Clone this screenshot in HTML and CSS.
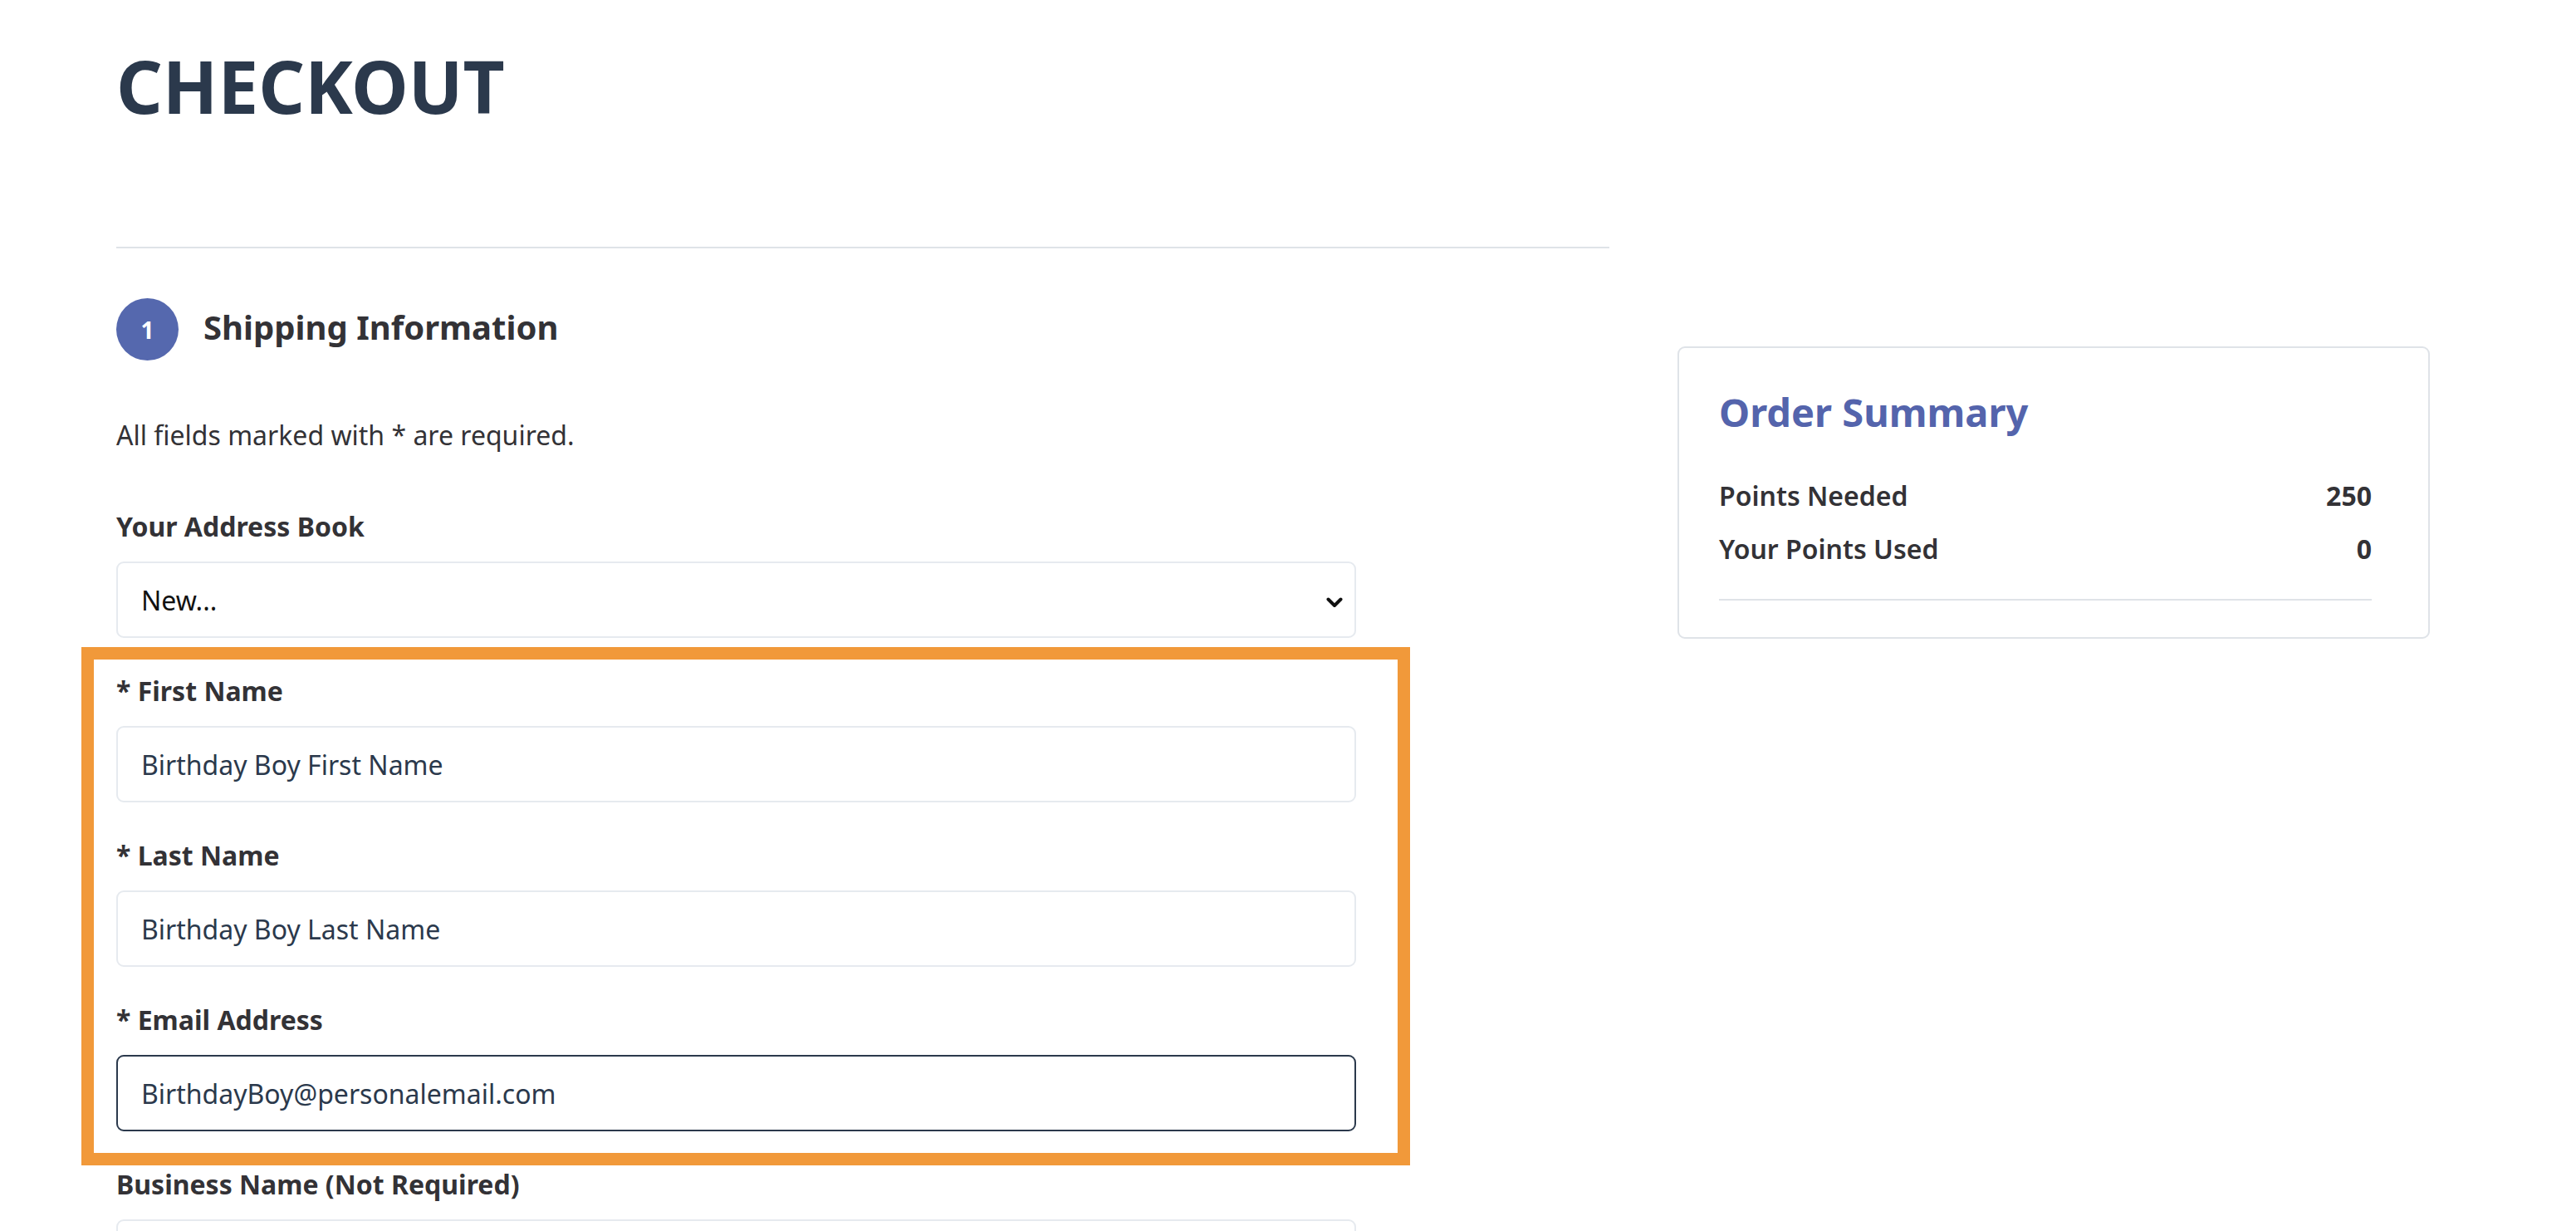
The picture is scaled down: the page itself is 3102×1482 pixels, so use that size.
FILE: index.html
```html
<!DOCTYPE html>
<html lang="en">
<head>
<meta charset="utf-8">
<title>Checkout</title>
<link rel="stylesheet" href="styles.css">
</head>
<body>
<div class="page">
  <main class="main">
    <h1 class="title">CHECKOUT</h1>
    <hr class="rule">
    <section class="step">
      <div class="step-head">
        <span class="step-num">1</span>
        <h2 class="step-title">Shipping Information</h2>
      </div>
      <p class="note">All fields marked with * are required.</p>
      <form class="form">
        <div class="field">
          <label class="label" for="book">Your Address Book</label>
          <div class="select-wrap">
            <select class="control select" id="book"><option>New...</option></select>
            <svg class="chev" width="20" height="13" viewBox="0 0 20 13" aria-hidden="true"><path d="M2.5 2.5 L10 10 L17.5 2.5" fill="none" stroke="#111" stroke-width="4" stroke-linecap="round" stroke-linejoin="round"/></svg>
          </div>
        </div>
        <div class="group">
          <div class="field">
            <label class="label" for="fn">* First Name</label>
            <input class="control input" id="fn" type="text" value="Birthday Boy First Name">
          </div>
          <div class="field">
            <label class="label" for="ln">* Last Name</label>
            <input class="control input" id="ln" type="text" value="Birthday Boy Last Name">
          </div>
          <div class="field">
            <label class="label" for="em">* Email Address</label>
            <input class="control input focused" id="em" type="text" value="BirthdayBoy@personalemail.com">
          </div>
        </div>
        <div class="field">
          <label class="label" for="bn">Business Name (Not Required)</label>
          <input class="control input" id="bn" type="text" value="">
        </div>
      </form>
    </section>
  </main>
  <aside class="summary">
    <h3 class="summary-title">Order Summary</h3>
    <div class="summary-rows">
      <div class="summary-row"><span>Points Needed</span><span class="val">250</span></div>
      <div class="summary-row"><span>Your Points Used</span><span class="val">0</span></div>
    </div>
    <div class="summary-rule"></div>
  </aside>
</div>
</body>
</html>
```

FILE: styles.css
```css
html, body {
  margin: 0;
  padding: 0;
  background: #ffffff;
}

body {
  font-family: "Noto Sans", "Open Sans", sans-serif;
  color: #333236;
}

.page {
  display: flex;
  align-items: flex-start;
  gap: 82px;
  padding-left: 140px;
}

.main {
  width: 1798px;
  flex: none;
}

.title {
  margin: 49px 0 0;
  font-size: 87px;
  line-height: 108px;
  font-weight: 700;
  color: #2b394c;
}

.rule {
  margin: 140px 0 0;
  height: 2px;
  border: none;
  background: #dfe3e8;
}

.step-head {
  display: flex;
  align-items: flex-start;
  gap: 30px;
  margin-top: 60px;
}

.step-num {
  flex: none;
  width: 75px;
  height: 75px;
  border-radius: 50%;
  background: #5568ae;
  color: #ffffff;
  font-size: 28px;
  font-weight: 700;
  display: flex;
  align-items: center;
  justify-content: center;
}

.step-title {
  margin: 11px 0 0;
  font-size: 40px;
  line-height: 48px;
  font-weight: 700;
  color: #333236;
}

.note {
  margin: 66px 0 0;
  font-size: 32px;
  line-height: 48px;
}

.form {
  width: 1493px;
  margin-top: 62px;
}

.field {
  display: flex;
  flex-direction: column;
  margin-bottom: 40px;
}

.label {
  font-size: 32px;
  line-height: 48px;
  font-weight: 700;
  margin-bottom: 18px;
  color: #333236;
}

.control {
  box-sizing: border-box;
  width: 100%;
  height: 92px;
  margin: 0;
  padding: 0 28px;
  border: 2px solid #e6eaef;
  border-radius: 9px;
  background: #ffffff;
  font-family: "Noto Sans", "Open Sans", sans-serif;
  font-size: 32px;
  color: #2b394c;
  outline: none;
}

.select {
  appearance: none;
  -webkit-appearance: none;
  color: #111111;
}

.select-wrap {
  position: relative;
}

.chev {
  position: absolute;
  right: 16px;
  top: 43px;
  pointer-events: none;
}

.focused {
  border-color: #2b394c;
}

.group {
  position: relative;
  display: flow-root;
}

.group::before {
  content: "";
  position: absolute;
  top: -29px;
  bottom: -1px;
  left: -42px;
  right: -65px;
  border: 15px solid #f1993a;
  pointer-events: none;
}

.summary {
  flex: none;
  box-sizing: border-box;
  width: 906px;
  margin-top: 417px;
  padding: 50px 68px 44px 48px;
  border: 2px solid #dfe3e8;
  border-radius: 9px;
}

.summary-title {
  margin: 0;
  font-size: 47px;
  line-height: 55px;
  font-weight: 700;
  color: #5464ac;
}

.summary-rows {
  display: flex;
  flex-direction: column;
  gap: 16px;
  margin-top: 49px;
}

.summary-row {
  display: flex;
  justify-content: space-between;
  font-size: 32px;
  line-height: 48px;
  font-weight: 600;
  color: #333236;
}

.summary-row .val {
  font-weight: 700;
}

.summary-rule {
  height: 2px;
  margin-top: 36px;
  background: #dfe3e8;
}
```
